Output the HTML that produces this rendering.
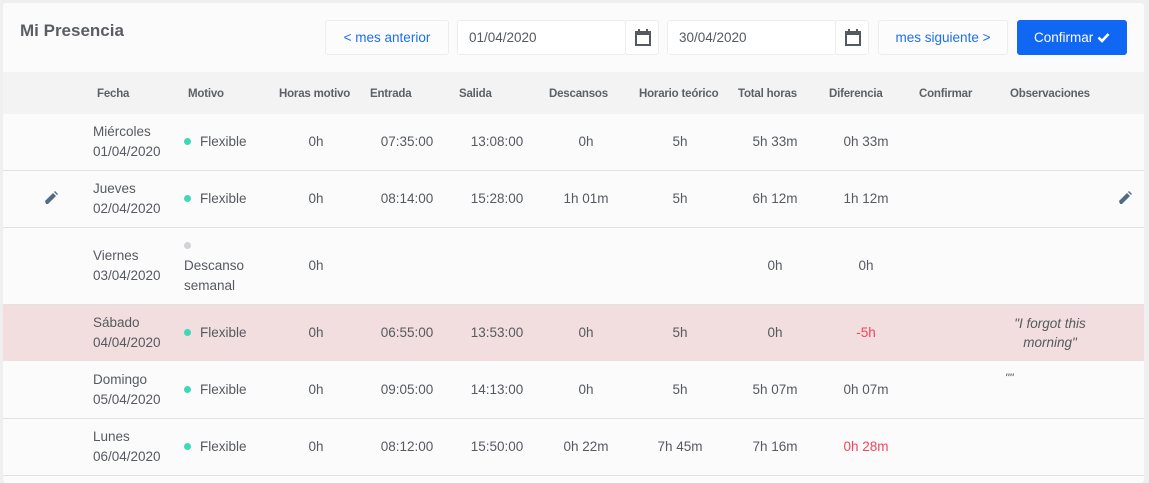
<!DOCTYPE html><html><head><style>
body{margin:0;width:1149px;height:478px;background:#efefef;font-family:"Liberation Sans",sans-serif;color:#555a60;position:relative;overflow:hidden}
.card{position:absolute;left:3px;top:3px;width:1141px;height:480px;background:#fcfbfc;border-radius:3px}
.a{position:absolute;white-space:nowrap}
.h{font-size:11.5px;font-weight:bold;color:#5d6166;top:88px;letter-spacing:-0.2px}
.btn{position:absolute;top:20px;height:35px;border:1px solid #eeedee;border-radius:3px;background:#fdfcfd;box-sizing:border-box;font-size:13.5px;line-height:33px}
.row{position:absolute;left:3px;width:1141px;border-bottom:1px solid #e2e2e2}
.c{position:absolute;font-size:13.5px;text-align:center;width:100px;margin-left:-50px;white-space:nowrap}
.dot{position:absolute;width:7px;height:7px;border-radius:50%;background:#3dd9b7}
.red{color:#f0445e}
</style></head><body>
<div class="card"></div>
<div class="a" style="left:20px;top:21px;font-size:17px;font-weight:bold;color:#5a5e63">Mi Presencia</div>
<div class="btn" style="left:325px;width:124px;color:#1a6ff3;text-align:center">&lt; mes anterior</div>
<div class="btn" style="left:457px;width:169px;padding-left:11px;background:#fff">01/04/2020</div>
<div class="btn" style="left:625px;width:34px;background:#fff"><svg width="34" height="33"><rect x="10" y="11" width="14" height="13" fill="none" stroke="#555a60" stroke-width="2"/><rect x="10" y="11" width="14" height="3" fill="#555a60"/><rect x="12" y="8" width="2" height="4" fill="#555a60"/><rect x="20" y="8" width="2" height="4" fill="#555a60"/></svg></div>
<div class="btn" style="left:667px;width:169px;padding-left:11px;background:#fff">30/04/2020</div>
<div class="btn" style="left:835px;width:34px;background:#fff"><svg width="34" height="33"><rect x="10" y="11" width="14" height="13" fill="none" stroke="#555a60" stroke-width="2"/><rect x="10" y="11" width="14" height="3" fill="#555a60"/><rect x="12" y="8" width="2" height="4" fill="#555a60"/><rect x="20" y="8" width="2" height="4" fill="#555a60"/></svg></div>
<div class="btn" style="left:878px;width:130px;color:#1a6ff3;text-align:center">mes siguiente &gt;</div>
<div class="btn" style="left:1017px;width:110px;background:#0f67f3;border-color:#0f67f3;color:#fff;text-align:center">Confirmar <svg width="13" height="11" style="vertical-align:-1px"><path d="M1.5 5.5 L5 9 L11.5 2" fill="none" stroke="#fff" stroke-width="2.6"/></svg></div>
<div style="position:absolute;left:3px;top:72px;width:1141px;height:42px;background:#f3f3f3"></div>
<div class="a h" style="left:97px">Fecha</div><div class="a h" style="left:188px">Motivo</div><div class="a h" style="left:279px">Horas motivo</div><div class="a h" style="left:370px">Entrada</div><div class="a h" style="left:459px">Salida</div><div class="a h" style="left:549px">Descansos</div><div class="a h" style="left:639px">Horario teórico</div><div class="a h" style="left:738px">Total horas</div><div class="a h" style="left:829px">Diferencia</div><div class="a h" style="left:919px">Confirmar</div><div class="a h" style="left:1010px">Observaciones</div>

<div class="row" style="top:114px;height:56px"></div>
<div class="row" style="top:171px;height:56px"></div>
<div class="row" style="top:228px;height:76px"></div>
<div class="row" style="top:305px;height:56px;background:#f2dede;border-bottom:none"></div>
<div class="row" style="top:362px;height:56px"></div>
<div class="row" style="top:419px;height:56px"></div>

<div style="font-size:13.5px;line-height:20px">
<div class="a" style="left:93px;top:122px">Miércoles<br>01/04/2020</div>
<div class="a" style="left:93px;top:179px">Jueves<br>02/04/2020</div>
<div class="a" style="left:93px;top:246px">Viernes<br>03/04/2020</div>
<div class="a" style="left:93px;top:313px">Sábado<br>04/04/2020</div>
<div class="a" style="left:93px;top:370px">Domingo<br>05/04/2020</div>
<div class="a" style="left:93px;top:427px">Lunes<br>06/04/2020</div>
<div class="dot" style="left:184px;top:138px"></div><div class="a" style="left:200px;top:132px">Flexible</div>
<div class="dot" style="left:184px;top:195px"></div><div class="a" style="left:200px;top:189px">Flexible</div>
<div class="dot" style="left:184px;top:242px;background:#d0d3d8"></div><div class="a" style="left:184px;top:256px">Descanso<br>semanal</div>
<div class="dot" style="left:184px;top:329px"></div><div class="a" style="left:200px;top:323px">Flexible</div>
<div class="dot" style="left:184px;top:386px"></div><div class="a" style="left:200px;top:380px">Flexible</div>
<div class="dot" style="left:184px;top:443px"></div><div class="a" style="left:200px;top:437px">Flexible</div>
</div>
<div style="line-height:20px">
<div class="c" style="left:316px;top:132px">0h</div><div class="c" style="left:407px;top:132px">07:35:00</div><div class="c" style="left:497px;top:132px">13:08:00</div><div class="c" style="left:586px;top:132px">0h</div><div class="c" style="left:680px;top:132px">5h</div><div class="c" style="left:775px;top:132px">5h 33m</div><div class="c" style="left:866px;top:132px">0h 33m</div>
<div class="c" style="left:316px;top:189px">0h</div><div class="c" style="left:407px;top:189px">08:14:00</div><div class="c" style="left:497px;top:189px">15:28:00</div><div class="c" style="left:586px;top:189px">1h 01m</div><div class="c" style="left:680px;top:189px">5h</div><div class="c" style="left:775px;top:189px">6h 12m</div><div class="c" style="left:866px;top:189px">1h 12m</div>
<div class="c" style="left:316px;top:256px">0h</div><div class="c" style="left:775px;top:256px">0h</div><div class="c" style="left:866px;top:256px">0h</div>
<div class="c" style="left:316px;top:323px">0h</div><div class="c" style="left:407px;top:323px">06:55:00</div><div class="c" style="left:497px;top:323px">13:53:00</div><div class="c" style="left:586px;top:323px">0h</div><div class="c" style="left:680px;top:323px">5h</div><div class="c" style="left:775px;top:323px">0h</div><div class="c red" style="left:866px;top:323px">-5h</div>
<div class="c" style="left:1050px;top:314px;font-style:italic;line-height:19px">"I forgot this<br>morning"</div>
<div class="c" style="left:316px;top:380px">0h</div><div class="c" style="left:407px;top:380px">09:05:00</div><div class="c" style="left:497px;top:380px">14:13:00</div><div class="c" style="left:586px;top:380px">0h</div><div class="c" style="left:680px;top:380px">5h</div><div class="c" style="left:775px;top:380px">5h 07m</div><div class="c" style="left:866px;top:380px">0h 07m</div>
<div class="a" style="left:1005px;top:368px;font-size:12px;font-style:italic">""</div>
<div class="c" style="left:316px;top:437px">0h</div><div class="c" style="left:407px;top:437px">08:12:00</div><div class="c" style="left:497px;top:437px">15:50:00</div><div class="c" style="left:586px;top:437px">0h 22m</div><div class="c" style="left:680px;top:437px">7h 45m</div><div class="c" style="left:775px;top:437px">7h 16m</div><div class="c red" style="left:866px;top:437px">0h 28m</div>
</div>
<svg class="a" style="left:44px;top:191px" width="14" height="14"><path d="M2 13 L1 10 L9 2 L12 5 L4 13 Z" fill="#4f6b86"/><path d="M10 1 L11 0 L14 3 L13 4 Z" fill="#4f6b86"/></svg>
<svg class="a" style="left:1118px;top:191px" width="14" height="14"><path d="M2 13 L1 10 L9 2 L12 5 L4 13 Z" fill="#4f6b86"/><path d="M10 1 L11 0 L14 3 L13 4 Z" fill="#4f6b86"/></svg>
</body></html>
